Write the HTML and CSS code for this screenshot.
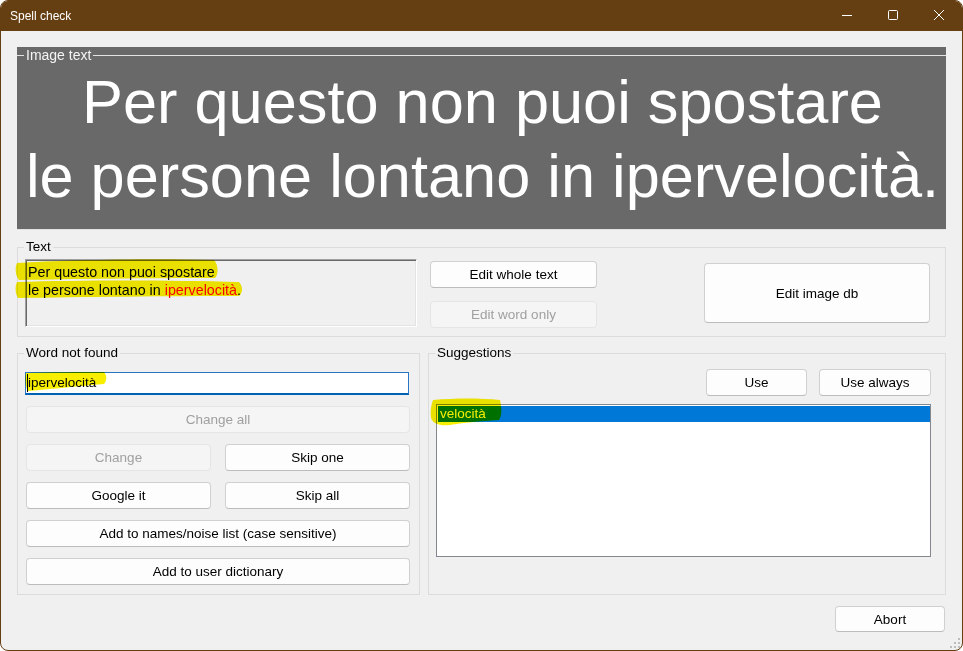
FILE: index.html
```html
<!DOCTYPE html>
<html>
<head>
<meta charset="utf-8">
<title>Spell check</title>
<link rel="stylesheet" href="styles.css">
</head>
<body>
<div class="window">
  <div class="titlebar">
    <span class="title">Spell check</span>
    <div class="caption">
      <span class="cbtn"><svg width="10" height="10" viewBox="0 0 10 10"><path d="M0 5.5H10" stroke="#fff" stroke-width="1"/></svg></span>
      <span class="cbtn"><svg width="10" height="10" viewBox="0 0 10 10"><rect x="0.5" y="0.5" width="9" height="9" rx="1" fill="none" stroke="#fff" stroke-width="1"/></svg></span>
      <span class="cbtn"><svg width="10" height="10" viewBox="0 0 10 10"><path d="M0 0L10 10M10 0L0 10" stroke="#fff" stroke-width="1"/></svg></span>
    </div>
  </div>
  <div class="client">
    <div class="imgpanel">
      <fieldset class="imgset">
        <legend>Image text</legend>
        <div class="bigtext">Per questo non puoi spostare<br>le persone lontano in ipervelocità.</div>
      </fieldset>
    </div>

    <fieldset class="group textgroup">
      <legend>Text</legend>
      <div class="textrow">
        <div class="rich">Per questo non puoi spostare<br>le persone lontano in <span class="err">ipervelocità</span>.</div>
        <div class="editcol">
          <button class="btn">Edit whole text</button>
          <button class="btn" disabled>Edit word only</button>
        </div>
        <button class="btn imgdb">Edit image db</button>
      </div>
    </fieldset>

    <div class="lower">
      <fieldset class="group wordgroup">
        <legend>Word not found</legend>
        <div class="wordcol">
          <div class="tbox"><span class="caret"></span><span>ipervelocità</span></div>
          <button class="btn" disabled>Change all</button>
          <div class="pair">
            <button class="btn" disabled>Change</button>
            <button class="btn">Skip one</button>
          </div>
          <div class="pair">
            <button class="btn">Google it</button>
            <button class="btn">Skip all</button>
          </div>
          <button class="btn">Add to names/noise list (case sensitive)</button>
          <button class="btn">Add to user dictionary</button>
        </div>
      </fieldset>

      <fieldset class="group suggroup">
        <legend>Suggestions</legend>
        <div class="userow">
          <button class="btn use">Use</button>
          <button class="btn usealways">Use always</button>
        </div>
        <div class="list">
          <div class="sel">velocità</div>
        </div>
      </fieldset>
    </div>

    <div class="footer">
      <button class="btn abort">Abort</button>
    </div>
  </div>

  <svg class="marks" width="963" height="651" viewBox="0 0 963 651">
    <path d="M17,263 C60,260 150,258 214,260 C218,264 219,274 215,278 C150,278 70,279 19,280 C15,276 15,267 17,263 Z"/>
    <path d="M17,282 C80,280 170,280 239,282 C243,286 243,293 239,296 C170,296 80,297 18,298 C15,293 15,286 17,282 Z"/>
    <path d="M26,373 C50,372 80,372 104,372 C107,375 107,381 104,384 C80,386 52,389 28,391 C25,386 25,378 26,373 Z"/>
    <path d="M433,400 C455,398 480,398 500,400 C502,408 502,416 499,420 C480,421 462,423 450,425 C440,426 433,424 431,418 C430,412 431,405 433,400 Z"/>
  </svg>

  <svg class="grip" width="12" height="12" viewBox="0 0 12 12">
    <rect x="9" y="1" width="2" height="2"/>
    <rect x="5" y="5" width="2" height="2"/>
    <rect x="9" y="5" width="2" height="2"/>
    <rect x="1" y="9" width="2" height="2"/>
    <rect x="5" y="9" width="2" height="2"/>
    <rect x="9" y="9" width="2" height="2"/>
  </svg>
</div>
</body>
</html>
```

FILE: styles.css
```css
* { box-sizing: border-box; }

html, body {
  margin: 0;
  padding: 0;
  background: #ffffff;
}

body {
  font-family: "Liberation Sans", Arial, sans-serif;
  font-size: 13.5px;
  color: #000;
}

.window {
  position: relative;
  width: 963px;
  height: 651px;
  border: 1px solid #653e12;
  border-radius: 8px;
  overflow: hidden;
  background: #f0f0f0;
  display: flex;
  flex-direction: column;
}

.titlebar {
  height: 30px;
  flex: none;
  background: #653e12;
  display: flex;
  align-items: center;
  color: #fff;
}

.title {
  flex: 1;
  font-size: 12px;
  padding-left: 9px;
  padding-bottom: 1px;
}

.caption {
  display: flex;
  align-self: stretch;
}

.cbtn {
  width: 46px;
  display: flex;
  align-items: center;
  justify-content: center;
}

.cbtn svg { margin-bottom: 2px; }

.client {
  flex: 1;
  padding: 16px 16px 0 16px;
  display: flex;
  flex-direction: column;
}

/* image text panel */
.imgpanel {
  height: 183px;
  flex: none;
  background: #696969;
}

.imgset {
  margin: 0;
  padding: 0;
  min-width: 0;
  height: 183px;
  border: 0;
  border-top: 1px solid #e3e3e3;
  border-bottom: 1px solid #e3e3e3;
}

.imgset legend {
  margin-left: 7px;
  padding: 0 2px;
  font-size: 14px;
  line-height: 16px;
  color: #f4f4f4;
}

.bigtext {
  font-family: "Liberation Sans", Arial, sans-serif;
  font-size: 61.3px;
  line-height: 74px;
  color: #ffffff;
  text-align: center;
  white-space: nowrap;
  padding-top: 2px;
  padding-left: 2px;
}

/* group boxes */
.group {
  margin: 0;
  min-width: 0;
  border: 1px solid #dcdcdc;
}

.group legend {
  padding: 0 2px;
  line-height: 16px;
}

.textgroup {
  flex: none;
  margin-top: 9px;
  padding: 4px 15px 8px 7px;
}

.textgroup legend { margin-left: -1px; }

.textrow {
  display: flex;
  align-items: flex-start;
}

.rich {
  width: 392px;
  height: 68px;
  flex: none;
  border: 1px solid;
  border-color: #a0a0a0 #ffffff #ffffff #a0a0a0;
  box-shadow: inset 1px 1px 0 #696969, inset -1px -1px 0 #e3e3e3;
  padding: 3px 0 0 2px;
  font-size: 14.3px;
  line-height: 18.3px;
  white-space: nowrap;
}

.err { color: #ff0000; }

.editcol {
  width: 167px;
  margin-left: 13px;
  margin-top: 2px;
  display: flex;
  flex-direction: column;
  gap: 13px;
}

.editcol .btn { height: 27px; }

.imgdb {
  width: 226px;
  height: 60px;
  margin-left: auto;
  margin-top: 4px;
}

/* buttons */
.btn {
  font: inherit;
  font-size: 13.5px;
  color: #000;
  background: #fdfdfd;
  border: 1px solid #d0d0d0;
  border-bottom-color: #bcbcbc;
  border-radius: 4px;
  padding: 0;
  display: flex;
  align-items: center;
  justify-content: center;
}

.btn:disabled {
  background: #f5f5f5;
  border-color: #e5e5e5;
  color: #a0a0a0;
}

/* lower row */
.lower {
  flex: none;
  margin-top: 8px;
  display: flex;
  gap: 8px;
}

.wordgroup {
  width: 403px;
  flex: none;
  padding: 11px 9px 9px 8px;
}

.wordgroup legend { margin-left: -2px; }

.wordcol {
  display: flex;
  flex-direction: column;
  gap: 11px;
}

.wordcol .btn { height: 27px; }

.tbox {
  height: 23px;
  margin: 0 1px 0 -1px;
  background: #ffffff;
  border: 1px solid #2a74c4;
  border-bottom: 2px solid #0062b5;
  padding-left: 1px;
  display: flex;
  align-items: center;
  line-height: 20px;
}

.caret {
  width: 1px;
  height: 18px;
  background: #000;
}

.pair {
  display: grid;
  grid-template-columns: 1fr 1fr;
  column-gap: 14px;
}

.pair .btn { height: 27px; }

.suggroup {
  flex: 1;
  padding: 8px 14px 0 7px;
}

.suggroup legend { margin-left: -1px; }

.userow {
  display: flex;
  justify-content: flex-end;
  gap: 12px;
}

.use { width: 101px; height: 27px; }
.usealways { width: 112px; height: 27px; }

.list {
  margin-top: 8px;
  height: 153px;
  background: #ffffff;
  border: 1px solid #828790;
  padding: 1px 0 0 1px;
}

.sel {
  height: 16px;
  line-height: 16px;
  background: #0078d7;
  color: #ffffff;
  padding-left: 2px;
}

.footer {
  display: flex;
  justify-content: flex-end;
  padding-top: 11px;
  padding-right: 1px;
}

.abort {
  width: 110px;
  height: 26px;
}

/* overlays */
.marks {
  position: absolute;
  left: -1px;
  top: -1px;
  pointer-events: none;
  mix-blend-mode: multiply;
  fill: #f8ee00;
}

.grip {
  position: absolute;
  right: 1px;
  bottom: 1px;
  fill: #bdbdbd;
}
```
